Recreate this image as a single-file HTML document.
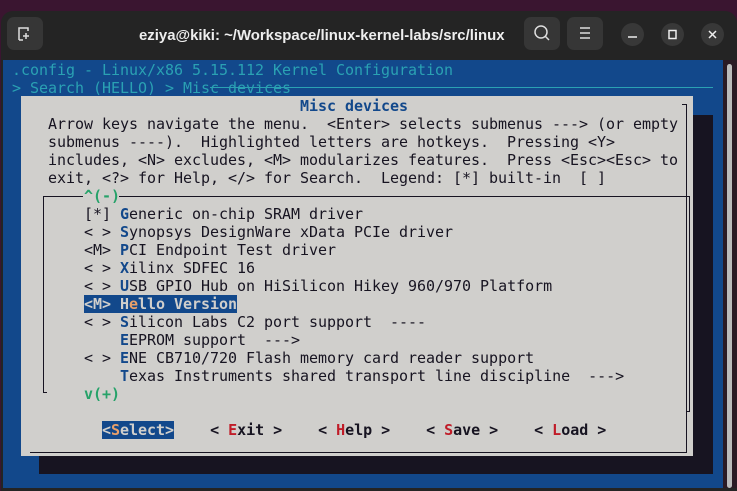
<!DOCTYPE html>
<html><head><meta charset="utf-8"><style>
*{margin:0;padding:0;box-sizing:border-box}
body{width:737px;height:488px;overflow:hidden;background:#3a1530;position:relative;font-family:"DejaVu Sans Mono","Liberation Mono",monospace}
#win{position:absolute;left:1px;top:11px;width:736px;height:480px;background:#242424;border-radius:12px 12px 0 0}
#title{position:absolute;left:138px;top:0;width:380px;height:49px;color:#eee;font-family:"Liberation Sans",sans-serif;font-weight:bold;font-size:15px;line-height:49px;white-space:nowrap}
#title span{display:inline-block;transform:scaleX(0.995);transform-origin:0 50%}
.btn{position:absolute;top:6px;width:36px;height:33px;background:#363636;border-radius:7px}
.cb{position:absolute;top:12px;width:23px;height:23px;border-radius:50%;background:#383838}
#term{position:absolute;left:3px;top:60px;width:720px;height:428px;background:#12488b}
#sb{position:absolute;left:723px;top:60px;width:14px;height:428px;background:#2a1a24}
.r{position:absolute;left:12px;white-space:pre;font-size:15px;letter-spacing:-0.03px;line-height:18px;height:18px;color:#171421}
.c{color:#2aa1b3}
.g{color:#26a269;font-weight:bold}
.h{color:#12488b;font-weight:bold}
.red{color:#c01c28}
.sel{background:#12488b;color:#d0cfcc}
.selh{color:#e9a06a}
</style></head><body>
<div id="win">
 <div id="title"><span>eziya@kiki: ~/Workspace/linux-kernel-labs/src/linux</span></div>
 <div class="btn" style="left:6px"><svg width="36" height="33"><path d="M12 23V11h9v3M16 23h-4M19 16v6M16 19h6" stroke="#ddd" stroke-width="1.5" fill="none"/></svg></div>
 <div class="btn" style="left:523px"><svg width="36" height="33"><circle cx="17" cy="15" r="6" stroke="#ddd" stroke-width="1.5" fill="none"/><path d="M21 19l4 4" stroke="#ddd" stroke-width="1.5"/></svg></div>
 <div class="btn" style="left:566px"><svg width="36" height="33"><path d="M13 11h10M13 16h10M13 21h10" stroke="#ddd" stroke-width="1.5"/></svg></div>
 <div class="cb" style="left:620px"><svg width="23" height="23"><path d="M7 14h9" stroke="#eee" stroke-width="1.5"/></svg></div>
 <div class="cb" style="left:660px"><svg width="23" height="23"><rect x="8" y="7.5" width="7" height="8" stroke="#eee" stroke-width="1.5" fill="none"/></svg></div>
 <div class="cb" style="left:700px"><svg width="23" height="23"><path d="M8 8l7 7M15 8l-7 7" stroke="#eee" stroke-width="1.5"/></svg></div>
</div>
<div id="term"></div>
<div id="sb"><div style="position:absolute;left:4px;top:4px;width:5px;height:424px;background:#bbb;border-radius:3px"></div></div>
<div style="position:absolute;left:39px;top:115px;width:674px;height:359px;background:#171421"></div>
<div style="position:absolute;left:21px;top:96px;width:672px;height:360px;background:#d0cfcc"></div>
<div style="position:absolute;left:210px;top:87px;width:503px;height:1px;background:#2aa1b3"></div>
<div style="position:absolute;left:686px;top:104px;width:1px;height:349px;background:#171421"></div>
<div style="position:absolute;left:30px;top:452px;width:657px;height:1px;background:#171421"></div>
<div style="position:absolute;left:682px;top:104px;width:5px;height:1px;background:#171421"></div>
<div style="position:absolute;left:43px;top:196px;width:1px;height:197px;background:#171421"></div>
<div style="position:absolute;left:43px;top:196px;width:40px;height:1px;background:#171421"></div>
<div style="position:absolute;left:119px;top:196px;width:571px;height:1px;background:#171421"></div>
<div style="position:absolute;left:43px;top:392px;width:4px;height:1px;background:#171421"></div>
<div style="position:absolute;left:689px;top:196px;width:1px;height:216px;background:#171421"></div>
<div style="position:absolute;left:686px;top:411px;width:4px;height:1px;background:#171421"></div>

<div class="r c" style="top:61px">.config - Linux/x86 5.15.112 Kernel Configuration</div>
<div class="r c" style="top:79px">&gt; Search (HELLO) &gt; Misc devices</div>
<div class="r" style="top:97px;left:300px;color:#12488b;font-weight:bold">Misc devices</div>
<div class="r" style="top:115px">    Arrow keys navigate the menu.  &lt;Enter&gt; selects submenus ---&gt; (or empty</div>
<div class="r" style="top:133px">    submenus ----).  Highlighted letters are hotkeys.  Pressing &lt;Y&gt;</div>
<div class="r" style="top:151px">    includes, &lt;N&gt; excludes, &lt;M&gt; modularizes features.  Press &lt;Esc&gt;&lt;Esc&gt; to</div>
<div class="r" style="top:169px">    exit, &lt;?&gt; for Help, &lt;/&gt; for Search.  Legend: [*] built-in  [ ]</div>
<div class="r g" style="top:187px">        ^(-)</div>
<div class="r" style="top:205px">        [*] <span class="h">G</span>eneric on-chip SRAM driver</div>
<div class="r" style="top:223px">        &lt; &gt; <span class="h">S</span>ynopsys DesignWare xData PCIe driver</div>
<div class="r" style="top:241px">        &lt;M&gt; <span class="h">P</span>CI Endpoint Test driver</div>
<div class="r" style="top:259px">        &lt; &gt; <span class="h">X</span>ilinx SDFEC 16</div>
<div class="r" style="top:277px">        &lt; &gt; <span class="h">U</span>SB GPIO Hub on HiSilicon Hikey 960/970 Platform</div>
<div class="r" style="top:295px;font-weight:bold">        <span class="sel">&lt;M&gt; H<span class="selh">e</span>llo Version</span></div>
<div class="r" style="top:313px">        &lt; &gt; <span class="h">S</span>ilicon Labs C2 port support  ----</div>
<div class="r" style="top:331px">            <span class="h">E</span>EPROM support  ---&gt;</div>
<div class="r" style="top:349px">        &lt; &gt; <span class="h">E</span>NE CB710/720 Flash memory card reader support</div>
<div class="r" style="top:367px">            <span class="h">T</span>exas Instruments shared transport line discipline  ---&gt;</div>
<div class="r g" style="top:385px">        v(+)</div>
<div class="r" style="top:421px;font-weight:bold">          <span class="sel">&lt;<span class="selh">S</span>elect&gt;</span>    &lt; <span class="red">E</span>xit &gt;    &lt; <span class="red">H</span>elp &gt;    &lt; <span class="red">S</span>ave &gt;    &lt; <span class="red">L</span>oad &gt;</div>
</body></html>
